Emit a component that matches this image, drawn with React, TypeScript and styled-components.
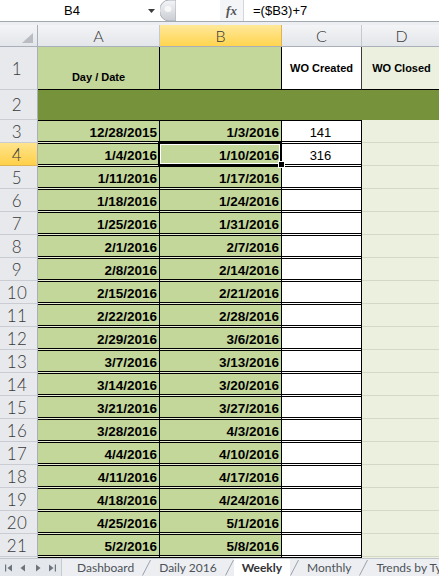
import React from 'react';
import styled, { createGlobalStyle, css } from 'styled-components';

const Global = createGlobalStyle`
  html, body { margin: 0; padding: 0; width: 439px; height: 576px; overflow: hidden; background: #fff; }
  #root { width: 439px; height: 576px; }
`;

const Window = styled.div`
  width: 439px;
  height: 576px;
  display: flex;
  flex-direction: column;
  overflow: hidden;
  font-family: "Liberation Sans", Arial, sans-serif;
`;

/* ---------- formula bar ---------- */
const FormulaBar = styled.div`
  height: 21px;
  flex-shrink: 0;
  display: flex;
  align-items: stretch;
  background: #fff;
  border-bottom: 1px solid #a3a9b1;
`;

const NameBox = styled.div`
  width: 160px;
  display: flex;
  align-items: center;
`;

const NameText = styled.div`
  flex: 1;
  text-align: center;
  font: 400 13px "Liberation Sans", Arial, sans-serif;
  color: #000;
  padding-left: 2px;
`;

const DropArrow = styled.div`
  width: 18px;
  display: flex;
  align-items: center;
  justify-content: center;
`;

const Knob = styled.div`
  width: 16px;
  display: flex;
  align-items: center;
`;

const FxSpacer = styled.div`
  width: 44px;
`;

const FxButton = styled.div`
  width: 23px;
  display: flex;
  align-items: center;
  justify-content: center;
  background: #f4f5f7;
  border-right: 1px solid #d3d7dc;
  font: italic 700 13px "Liberation Serif", "Times New Roman", serif;
  color: #505458;
`;

const FormulaText = styled.div`
  flex: 1;
  display: flex;
  align-items: center;
  padding-left: 9px;
  font: 400 13px "Liberation Sans", Arial, sans-serif;
  color: #000;
`;

const Band = styled.div`
  height: 3px;
  flex-shrink: 0;
  background: #eceef1;
`;

/* ---------- sheet ---------- */
const SheetArea = styled.div`
  flex: 1;
  overflow: hidden;
  position: relative;
`;

const Sheet = styled.div`
  display: grid;
  grid-template-columns: 38px 122px 122px 80px 80px;
  grid-template-rows: 22px 43px 30px;
  grid-auto-rows: 23px;
  width: 442px;
`;

const Corner = styled.div`
  box-sizing: border-box;
  background: linear-gradient(#f3f4f6, #e3e6ea);
  border-right: 1px solid #a9b0b9;
  border-bottom: 1px solid #a9b0b9;
  display: flex;
  align-items: flex-end;
  justify-content: flex-end;
  padding: 0 4px 3px 0;
`;

const ColHead = styled.div<{ $sel?: boolean }>`
  box-sizing: border-box;
  display: flex;
  align-items: center;
  justify-content: center;
  font: 300 16px Lato, "Open Sans", sans-serif;
  color: #3a3a3a;
  border-bottom: 1px solid #a9b0b9;
  border-right: 1px solid ${p => (p.$sel ? '#e2b451' : '#c4c9cf')};
  background: ${p => (p.$sel ? 'linear-gradient(#ffe89a, #ffd54f)' : 'linear-gradient(#f3f4f6, #e3e6ea)')};
`;

const RowHead = styled.div<{ $sel?: boolean }>`
  box-sizing: border-box;
  display: flex;
  align-items: center;
  justify-content: center;
  padding-right: 3px;
  font: 300 17px Lato, "Open Sans", sans-serif;
  letter-spacing: 0.5px;
  color: #3a3a3a;
  border-right: 1px solid #a9b0b9;
  border-bottom: 1px solid ${p => (p.$sel ? '#e2b451' : '#c9cdd3')};
  background: ${p => (p.$sel ? 'linear-gradient(#ffe48c, #ffd04a)' : '#e7e9ec')};
`;

const TitleCell = styled.div<{ $bg: string; $right: string; $valign: 'center' | 'end' }>`
  box-sizing: border-box;
  background: ${p => p.$bg};
  border-right: 1px solid ${p => p.$right};
  border-bottom: 1px solid #000;
  display: flex;
  justify-content: center;
  align-items: ${p => (p.$valign === 'end' ? 'flex-end' : 'center')};
  padding-bottom: ${p => (p.$valign === 'end' ? '6px' : '0')};
  font: 700 11px "Liberation Sans", Arial, sans-serif;
  color: #000;
  white-space: nowrap;
`;

const BandCell = styled.div`
  grid-column: 2 / -1;
  background: #76933c;
`;

type Lines = 'double' | 'faint';

const Cell = styled.div<{
  $bg: string;
  $gap: string;
  $right: string;
  $align: 'right' | 'center';
  $bold?: boolean;
  $lines: Lines;
  $sel?: boolean;
}>`
  position: relative;
  z-index: ${p => (p.$sel ? 2 : 0)};
  box-sizing: border-box;
  background: ${p => p.$bg};
  border-right: 1px solid ${p => p.$right};
  display: flex;
  align-items: center;
  justify-content: ${p => (p.$align === 'right' ? 'flex-end' : 'center')};
  padding: 0 2px 0 0;
  font: ${p => (p.$bold ? '700 13.5px' : '400 13px')} "Liberation Sans", Arial, sans-serif;
  color: #000;
  white-space: nowrap;
  ${p =>
    p.$lines === 'double'
      ? css`
          border-top: 1px solid #000;
          box-shadow: inset 0 -1px 0 ${p.$gap}, inset 0 -2px 0 #000;
        `
      : css`
          box-shadow: inset 0 -1px 0 #d3d9c6;
        `}
`;

const Selection = styled.div`
  position: absolute;
  left: -2px;
  top: -2px;
  right: -1px;
  bottom: 0;
  border: 2px solid #000;
  box-shadow: inset 0 0 0 1px #fff;
  pointer-events: none;
`;

const FillHandle = styled.div`
  position: absolute;
  right: -4px;
  bottom: -3px;
  width: 5px;
  height: 5px;
  box-sizing: border-box;
  background: #000;
  outline: 1px solid #fff;
`;

/* ---------- tab bar ---------- */
const TabBar = styled.div`
  height: 18px;
  flex-shrink: 0;
  display: flex;
  align-items: stretch;
  background: #e4e7eb;
  border-top: 1px solid #c3c8cf;
  box-sizing: border-box;
`;

const Nav = styled.div`
  width: 62px;
  display: flex;
  align-items: center;
  justify-content: space-around;
  padding: 0 2px;
  box-sizing: border-box;
  border-right: 1px solid #c6cbd2;
`;

const Tabs = styled.div`
  flex: 1;
  display: flex;
  align-items: stretch;
  padding-left: 7px;
  background: #eceef1;
  overflow: hidden;
`;

const Tab = styled.div<{ $active?: boolean }>`
  display: flex;
  align-items: center;
  padding: 0 8px;
  font: ${p => (p.$active ? 700 : 400)} 12px/14px Lato, "Liberation Sans", sans-serif;
  color: ${p => (p.$active ? '#333' : '#4c5258')};
  background: ${p => (p.$active ? '#fff' : 'transparent')};
  white-space: nowrap;
  flex-shrink: 0;
`;

const Slash = () => (
  <svg width="9" height="17" viewBox="0 0 9 17" style={{ flexShrink: 0 }}>
    <line x1="0.5" y1="16.5" x2="8.5" y2="1" stroke="#9aa1aa" strokeWidth="1" />
  </svg>
);

/* ---------- icons ---------- */
const NavIcon = ({ kind }: { kind: 'first' | 'prev' | 'next' | 'last' }) => (
  <svg width="8" height="8" viewBox="0 0 8 8">
    {kind === 'first' && (
      <>
        <rect x="0" y="0.5" width="1.2" height="7" fill="#6e747c" />
        <polygon points="7,0.5 2.5,4 7,7.5" fill="#6e747c" />
      </>
    )}
    {kind === 'prev' && <polygon points="6,0.5 1.5,4 6,7.5" fill="#6e747c" />}
    {kind === 'next' && <polygon points="2,0.5 6.5,4 2,7.5" fill="#6e747c" />}
    {kind === 'last' && (
      <>
        <polygon points="1,0.5 5.5,4 1,7.5" fill="#6e747c" />
        <rect x="6.8" y="0.5" width="1.2" height="7" fill="#6e747c" />
      </>
    )}
  </svg>
);

/* ---------- data ---------- */
const fmt = (d: Date) => `${d.getUTCMonth() + 1}/${d.getUTCDate()}/${d.getUTCFullYear()}`;
const start = Date.UTC(2015, 11, 28);
const DAY = 86400000;
const rows = Array.from({ length: 20 }, (_, i) => {
  const n = i + 3;
  const visible = n <= 21;
  const a = new Date(start + i * 7 * DAY);
  const b = new Date(start + (i * 7 + 6) * DAY);
  return {
    n,
    label: visible ? String(n) : '',
    a: visible ? fmt(a) : '',
    b: visible ? fmt(b) : '',
    c: i === 0 ? '141' : i === 1 ? '316' : '',
  };
});

const GREEN = '#c4d79b';
const GREEN_GAP = '#e4ecd2';
const PALE = '#ebf1de';

export default function App() {
  return (
    <Window>
      <Global />
      <FormulaBar>
        <NameBox>
          <NameText>B4</NameText>
          <DropArrow>
            <svg width="7" height="4" viewBox="0 0 7 4">
              <polygon points="0,0 7,0 3.5,4" fill="#3c3c3c" />
            </svg>
          </DropArrow>
        </NameBox>
        <Knob>
          <svg width="16" height="21" viewBox="0 0 16 21">
            <defs>
              <linearGradient id="kg" x1="0" y1="0" x2="0" y2="1">
                <stop offset="0" stopColor="#f4f5f7" />
                <stop offset="1" stopColor="#c9cdd3" />
              </linearGradient>
            </defs>
            <path d="M16 0 L9 0 A9.5 10.5 0 0 0 9 21 L16 21 Z" fill="url(#kg)" stroke="#a9aeb5" strokeWidth="1" />
            <ellipse cx="8" cy="9" rx="3.5" ry="3" fill="#fdfdfd" opacity="0.8" />
          </svg>
        </Knob>
        <FxSpacer />
        <FxButton>fx</FxButton>
        <FormulaText>=($B3)+7</FormulaText>
      </FormulaBar>
      <Band />
      <SheetArea>
        <Sheet>
          <Corner>
            <svg width="11" height="10" viewBox="0 0 11 10">
              <polygon points="0,10 11,0 11,10" fill="#b9bdc3" />
            </svg>
          </Corner>
          <ColHead>A</ColHead>
          <ColHead $sel>B</ColHead>
          <ColHead>C</ColHead>
          <ColHead>D</ColHead>

          <RowHead>1</RowHead>
          <TitleCell $bg={GREEN} $right="#000" $valign="end">Day / Date</TitleCell>
          <TitleCell $bg={GREEN} $right="#000" $valign="center" />
          <TitleCell $bg="#fff" $right="#3a3a3a" $valign="center">WO Created</TitleCell>
          <TitleCell $bg={PALE} $right="transparent" $valign="center">WO Closed</TitleCell>

          <RowHead>2</RowHead>
          <BandCell />

          {rows.map(r => (
            <React.Fragment key={r.n}>
              <RowHead $sel={r.n === 4}>{r.label}</RowHead>
              <Cell $bg={GREEN} $gap={GREEN_GAP} $right="#000" $align="right" $bold $lines="double">
                {r.a}
              </Cell>
              <Cell $bg={GREEN} $gap={GREEN_GAP} $right="#000" $align="right" $bold $lines="double" $sel={r.n === 4}>
                {r.b}
                {r.n === 4 && (
                  <Selection>
                    <FillHandle />
                  </Selection>
                )}
              </Cell>
              <Cell $bg="#fff" $gap="#fff" $right="#000" $align="center" $lines="double">
                {r.c}
              </Cell>
              <Cell $bg={PALE} $gap={PALE} $right="transparent" $align="center" $lines="faint" />
            </React.Fragment>
          ))}
        </Sheet>
      </SheetArea>
      <TabBar>
        <Nav>
          <NavIcon kind="first" />
          <NavIcon kind="prev" />
          <NavIcon kind="next" />
          <NavIcon kind="last" />
        </Nav>
        <Tabs>
          <Tab>Dashboard</Tab>
          <Slash />
          <Tab>Daily 2016</Tab>
          <Slash />
          <Tab $active>Weekly</Tab>
          <Slash />
          <Tab>Monthly</Tab>
          <Slash />
          <Tab>Trends by Type</Tab>
        </Tabs>
      </TabBar>
    </Window>
  );
}
